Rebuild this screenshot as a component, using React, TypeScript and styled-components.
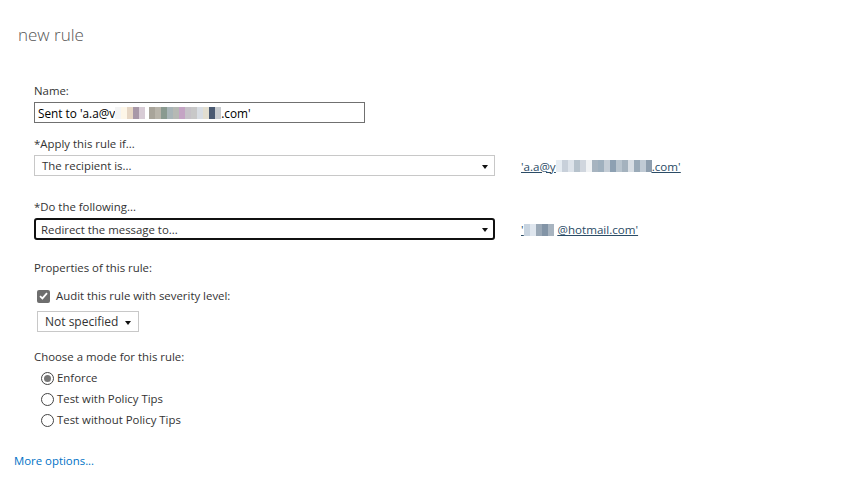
import React from "react";
import styled, { createGlobalStyle } from "styled-components";

const GlobalStyle = createGlobalStyle`
  html, body {
    margin: 0;
    padding: 0;
    background: #ffffff;
  }
  body {
    font-family: "Open Sans", "Noto Sans", "Liberation Sans", sans-serif;
    color: #333333;
  }
`;

// pixel cells used to hide parts of the addresses
type Cell = { c: string; w?: number };

const nameCells: Cell[] = [
  { c: "#f4f4f4" }, { c: "#fdf6e8" }, { c: "#e6d6c4" }, { c: "#a898a8" }, { c: "#d8ccd6" },
  { c: "#ffffff", w: 4 }, { c: "#a8a49a" }, { c: "#b8b4aa" }, { c: "#8a9a90" }, { c: "#a9b5b8" },
  { c: "#b6b9b4" }, { c: "#c4a4c4" }, { c: "#c6c2c8" }, { c: "#c8c8c8" }, { c: "#d8dde3" },
  { c: "#e2ded0" }, { c: "#4a5a72" }, { c: "#c8ccd0" },
];

const ruleCells: Cell[] = [
  { c: "#e6ecf2" }, { c: "#c8d0da" }, { c: "#dde3ea" }, { c: "#b6c2cc" }, { c: "#d0d6de" },
  { c: "#f0f2f4" }, { c: "#a7b4c0" }, { c: "#9fb0be" }, { c: "#c4cdd6" }, { c: "#8da0b2" },
  { c: "#b8c4ce" }, { c: "#a4b2be" }, { c: "#d8dee4" }, { c: "#9aaab8" }, { c: "#c0cad4" },
  { c: "#8e9eae" },
];

const redirectCells: Cell[] = [
  { c: "#c8d4e0" }, { c: "#dfe6ee" }, { c: "#9aa8b6" }, { c: "#8294a6" }, { c: "#a8b4c0" },
];

const Page = styled.div`
  width: 857px;
  height: 483px;
  box-sizing: border-box;
  padding-top: 21px;
`;

const Title = styled.h1`
  margin: 0 0 0 18px;
  font-size: 17px;
  line-height: 28px;
  font-weight: 300;
  color: #555555;
`;

const Form = styled.div`
  display: flex;
  flex-direction: column;
  padding-left: 34px;
  margin-top: 34px;
`;

const Label = styled.div<{ top?: number }>`
  font-size: 11.4px;
  line-height: 16px;
  color: #333333;
  margin-top: ${({ top }) => top ?? 0}px;
  margin-bottom: 3px;
`;

const TextInput = styled.div`
  width: 331px;
  height: 21px;
  box-sizing: border-box;
  border: 1px solid #707070;
  display: flex;
  align-items: center;
  padding-left: 3px;
  font-size: 11.8px;
  color: #000000;
  white-space: nowrap;
`;

const FieldRow = styled.div`
  display: flex;
  align-items: center;
  gap: 26px;
`;

const Select = styled.div<{ focused?: boolean; width: number }>`
  width: ${({ width }) => width}px;
  height: ${({ focused }) => (focused ? 22 : 21)}px;
  box-sizing: border-box;
  border: ${({ focused }) => (focused ? "2px solid #111111" : "1px solid #c8c8c8")};
  border-radius: ${({ focused }) => (focused ? 3 : 0)}px;
  display: flex;
  align-items: center;
  justify-content: space-between;
  padding: 0 ${({ focused }) => (focused ? 5 : 6)}px 0 ${({ focused }) => (focused ? 5 : 7)}px;
  font-size: 11.4px;
  color: #333333;
`;

const Arrow = styled.span`
  width: 0;
  height: 0;
  border-left: 3.5px solid transparent;
  border-right: 3.5px solid transparent;
  border-top: 4px solid #111111;
  margin-top: 2px;
`;

const RuleLink = styled.a`
  display: inline-flex;
  align-items: center;
  font-size: 11.6px;
  color: #2b4c66;
  white-space: nowrap;
  margin-top: 1px;
  span.t {
    text-decoration: underline;
  }
`;

const Mosaic = styled.span`
  display: inline-flex;
  height: 12px;
  align-items: stretch;
`;

const CheckRow = styled.div`
  display: flex;
  align-items: center;
  gap: 6px;
  margin-top: 9px;
  padding-left: 3px;
  font-size: 11.4px;
  line-height: 16px;
  color: #333333;
`;

const CheckBox = styled.span`
  width: 13px;
  height: 13px;
  border-radius: 2px;
  background: #6e6e6e;
  display: inline-flex;
  align-items: center;
  justify-content: center;
`;

const SmallSelect = styled(Select)`
  margin: 7px 0 0 3px;
  padding: 0 7px 0 7px;
  font-size: 12px;
`;

const RadioList = styled.div`
  display: flex;
  flex-direction: column;
  gap: 5px;
  padding-left: 7px;
  margin-top: 2px;
`;

const RadioRow = styled.div`
  display: flex;
  align-items: center;
  gap: 3px;
  font-size: 11.4px;
  line-height: 16px;
  color: #333333;
`;

const Radio = styled.span<{ checked?: boolean }>`
  width: 11px;
  height: 11px;
  border: 1px solid #444444;
  border-radius: 50%;
  display: inline-flex;
  align-items: center;
  justify-content: center;
  &::after {
    content: "";
    width: 7px;
    height: 7px;
    border-radius: 50%;
    background: ${({ checked }) => (checked ? "#777777" : "transparent")};
  }
`;

const MoreLink = styled.a`
  display: block;
  margin: 25px 0 0 14px;
  font-size: 11.4px;
  line-height: 16px;
  color: #0072c6;
  text-decoration: none;
`;

const Pixels: React.FC<{ cells: Cell[] }> = ({ cells }) => (
  <Mosaic>
    {cells.map((cell, i) => (
      <span key={i} style={{ width: cell.w ?? 6, background: cell.c }} />
    ))}
  </Mosaic>
);

const App: React.FC = () => {
  return (
    <Page>
      <GlobalStyle />
      <Title>new rule</Title>
      <Form>
        <Label>Name:</Label>
        <TextInput>
          Sent to 'a.a@v
          <Pixels cells={nameCells} />
          .com'
        </TextInput>

        <Label top={13}>*Apply this rule if...</Label>
        <FieldRow>
          <Select width={461}>
            The recipient is...
            <Arrow />
          </Select>
          <RuleLink href="#">
            <span className="t">'a.a@y</span>
            <Pixels cells={ruleCells} />
            <span className="t">.com'</span>
          </RuleLink>
        </FieldRow>

        <Label top={23}>*Do the following...</Label>
        <FieldRow>
          <Select width={461} focused>
            Redirect the message to...
            <Arrow />
          </Select>
          <RuleLink href="#">
            <span className="t">'</span>
            <Pixels cells={redirectCells} />
            <span className="t" style={{ marginLeft: 4 }}>@hotmail.com'</span>
          </RuleLink>
        </FieldRow>

        <Label top={20}>Properties of this rule:</Label>
        <CheckRow>
          <CheckBox>
            <svg width="9" height="8" viewBox="0 0 9 8">
              <path d="M1 4.2 L3.4 6.4 L8 1.2" fill="none" stroke="#ffffff" strokeWidth="1.8" />
            </svg>
          </CheckBox>
          Audit this rule with severity level:
        </CheckRow>
        <SmallSelect width={102}>
          Not specified
          <Arrow />
        </SmallSelect>

        <Label top={17}>Choose a mode for this rule:</Label>
        <RadioList>
          <RadioRow>
            <Radio checked />
            Enforce
          </RadioRow>
          <RadioRow>
            <Radio />
            Test with Policy Tips
          </RadioRow>
          <RadioRow>
            <Radio />
            Test without Policy Tips
          </RadioRow>
        </RadioList>
      </Form>
      <MoreLink href="#">More options...</MoreLink>
    </Page>
  );
};

export default App;
